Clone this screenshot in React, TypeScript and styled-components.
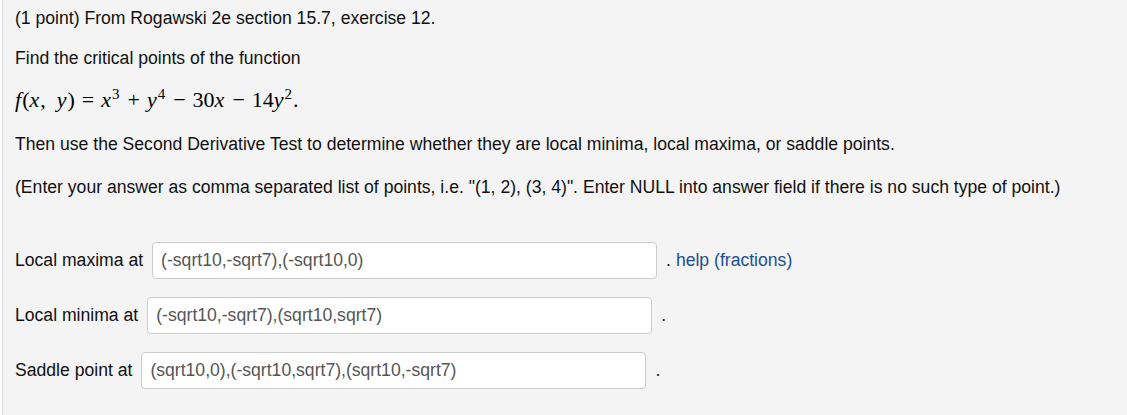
import styled, { createGlobalStyle } from 'styled-components'

const GlobalStyle = createGlobalStyle`
    html, body {
        margin: 0;
        padding: 0;
        background: #fff;
    }
    #root {
        height: 415px;
    }
`

const Problem = styled.div`
    box-sizing: border-box;
    height: 415px;
    margin-left: 2px;
    border-left: 1px solid #dedede;
    background: #f4f4f4;
    padding: 6px 12px 0 12px;
    font-family: 'Liberation Sans', Arial, sans-serif;
    font-size: 17.6px;
    line-height: 25px;
    color: #111;
`
const Para = styled.p<{ $gap?: number }>`
    margin: 0 0 ${(p) => p.$gap ?? 15}px 0;
    white-space: nowrap;
`
const MathLine = styled.p`
    margin: 0 0 18px 0;
    height: 28px;
    line-height: 28px;
    font-family: 'Liberation Serif', 'Times New Roman', serif;
    font-size: 22px;
    color: #000;
    white-space: nowrap;
`
const V = styled.i`
    font-style: italic;
    margin-right: 1px;
`
const Op = styled.span`
    margin: 0 7px;
`
const Sup = styled.sup`
    font-size: 15px;
    vertical-align: 8px;
    line-height: 0;
    margin-right: 1px;
`
const Answers = styled.div`
    display: flex;
    flex-direction: column;
    gap: 18px;
    margin-top: 42px;
`
const Row = styled.div`
    display: flex;
    align-items: center;
    gap: 9px;
    white-space: nowrap;
`
const AnswerInput = styled.input`
    box-sizing: border-box;
    width: 505px;
    height: 37px;
    padding: 0 8px;
    border: 1px solid #ccc;
    border-radius: 4px;
    background: #fff;
    color: #555;
    font-family: 'Liberation Sans', Arial, sans-serif;
    font-size: 17.6px;
    outline: none;
`
const HelpLink = styled.a`
    color: #1c4f8f;
    text-decoration: none;
`

export default function App() {
    return (
        <>
            <GlobalStyle />
            <Problem>
                <Para>(1 point) From Rogawski 2e section 15.7, exercise 12.</Para>
                <Para $gap={15}>Find the critical points of the function</Para>
                <MathLine>
                    <V>f</V>(<V>x</V>,&nbsp;&nbsp;<V>y</V>)
                    <Op>=</Op>
                    <V>x</V>
                    <Sup>3</Sup>
                    <Op>+</Op>
                    <V>y</V>
                    <Sup>4</Sup>
                    <Op>−</Op>
                    30<V>x</V>
                    <Op>−</Op>
                    14<V>y</V>
                    <Sup>2</Sup>.
                </MathLine>
                <Para $gap={18}>
                    Then use the Second Derivative Test to determine whether they are local
                    minima, local maxima, or saddle points.
                </Para>
                <Para $gap={0}>
                    (Enter your answer as comma separated list of points, i.e. "(1, 2), (3,
                    4)". Enter NULL into answer field if there is no such type of point.)
                </Para>
                <Answers>
                    <Row>
                        <span>Local maxima at</span>
                        <AnswerInput
                            readOnly
                            defaultValue="(-sqrt10,-sqrt7),(-sqrt10,0)"
                        />
                        <span>
                            . <HelpLink href="#">help (fractions)</HelpLink>
                        </span>
                    </Row>
                    <Row>
                        <span>Local minima at</span>
                        <AnswerInput
                            readOnly
                            defaultValue="(-sqrt10,-sqrt7),(sqrt10,sqrt7)"
                        />
                        <span>.</span>
                    </Row>
                    <Row>
                        <span>Saddle point at</span>
                        <AnswerInput
                            readOnly
                            defaultValue="(sqrt10,0),(-sqrt10,sqrt7),(sqrt10,-sqrt7)"
                        />
                        <span>.</span>
                    </Row>
                </Answers>
            </Problem>
        </>
    )
}
